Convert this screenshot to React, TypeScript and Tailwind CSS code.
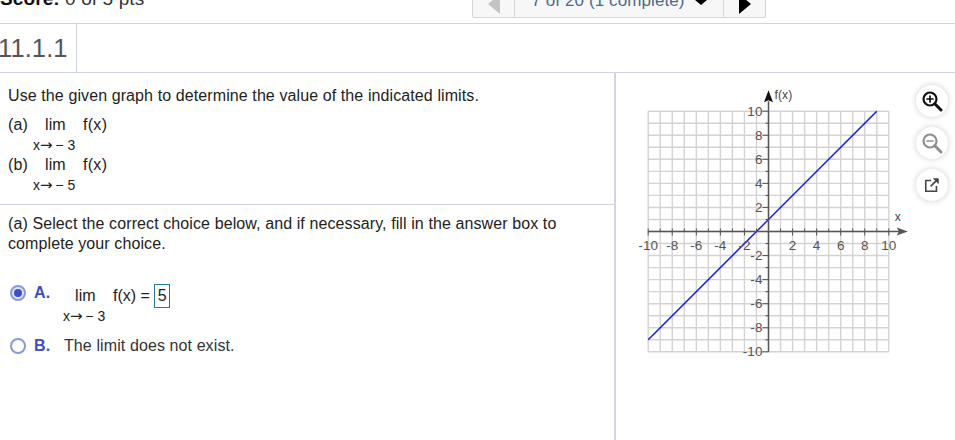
const font = "[font-family:'Liberation_Sans',Arial,sans-serif]"

function Limit({ to, className = '' }: { to: string; className?: string }) {
    return (
        <div className={`flex flex-col items-start ${className}`}>
            <div className="h-[20px] leading-[20px] pl-[12px] whitespace-pre">lim</div>
            <div className="h-[20px] leading-[20px] text-[14px] whitespace-pre">
                x<span className="[font-family:'DejaVu_Sans',sans-serif] text-[15px] tracking-[-1.5px]">→</span> − {to}
            </div>
        </div>
    )
}

function LimitRow({ label, to }: { label: string; to: string }) {
    return (
        <div className="flex h-[40px] text-[#222]">
            <div className="w-[25px] leading-[20px]">{label}</div>
            <div className="flex">
                <Limit to={to} className="w-[50px]" />
                <div className="leading-[20px] tracking-[0.3px]">f(x)</div>
            </div>
        </div>
    )
}

function Graph() {
    const unit = 12.03
    const x0 = 152.5
    const y0 = 151.5
    const px = (v: number) => x0 + v * unit
    const py = (v: number) => y0 - v * unit
    const ticks = Array.from({ length: 21 }, (_, i) => i - 10)
    const labels = [-10, -8, -6, -4, -2, 2, 4, 6, 8, 10]

    return (
        <svg width="300" height="290" viewBox="0 0 300 290" className="shrink-0">
            {ticks.map(t => (
                <g key={t} stroke="#d3d3d3" strokeWidth="1.4">
                    <line x1={px(t)} y1={py(10)} x2={px(t)} y2={py(-10)} />
                    <line x1={px(-10)} y1={py(t)} x2={px(10)} y2={py(t)} />
                </g>
            ))}
            <line x1={px(-10)} y1={py(-9)} x2={px(9)} y2={py(10)} stroke="#1414e6" strokeWidth="1.5" />
            <line x1={px(-10)} y1={y0} x2={px(10) + 12} y2={y0} stroke="#555" strokeWidth="1.5" />
            <line x1={x0} y1={py(-10)} x2={x0} y2={py(10) - 10} stroke="#555" strokeWidth="1.5" />
            <path d={`M${x0} ${py(10) - 21} L${x0 + 4.5} ${py(10) - 9} L${x0} ${py(10) - 11} L${x0 - 4.5} ${py(10) - 9} Z`} fill="#111" />
            <path d={`M${px(10) + 19} ${y0} L${px(10) + 8} ${y0 - 4} L${px(10) + 10} ${y0} L${px(10) + 8} ${y0 + 4} Z`} fill="#555" />
            {ticks.map(t => (
                <g key={t} stroke="#555" strokeWidth="1">
                    <line x1={px(t)} y1={y0 - 3} x2={px(t)} y2={y0 + (t % 2 === 0 ? 4 : 0)} />
                    <line x1={x0 - (t % 2 === 0 ? 6 : 3)} y1={py(t)} x2={x0} y2={py(t)} />
                </g>
            ))}
            <g fontFamily="'Liberation Sans', Arial, sans-serif" fontSize="13.5" fill="#555">
                {labels.map(v => (
                    <text key={`x${v}`} x={px(v)} y={y0 + 18} textAnchor="middle">{v}</text>
                ))}
                {labels.map(v => (
                    <text key={`y${v}`} x={x0 - 6} y={py(v) + 4.5} textAnchor="end">{v}</text>
                ))}
                <text x={px(10) + 9} y={y0 - 11} textAnchor="middle" fontSize="12" fill="#444">x</text>
                <text x={x0 + 6} y={py(10) - 12} fontSize="12" fill="#444">f(x)</text>
            </g>
        </svg>
    )
}

function ZoomIcon({ plus, color }: { plus: boolean; color: string }) {
    return (
        <svg width="22" height="22" viewBox="0 0 22 22" fill="none" stroke={color} strokeLinecap="round">
            <circle cx="9" cy="9" r="6.5" strokeWidth="2.2" />
            <path d="M13.8 13.8 L20 20" strokeWidth="3" />
            <path d="M6 9 H12" strokeWidth="1.7" />
            {plus && <path d="M9 6 V12" strokeWidth="1.7" />}
        </svg>
    )
}

function ToolButton({ children }: { children: React.ReactNode }) {
    return (
        <div className="w-[32px] h-[32px] rounded-full bg-white shadow-[0_0_6px_rgba(0,0,0,0.2)] flex items-center justify-center">
            {children}
        </div>
    )
}

export default function App() {
    return (
        <div className={`w-[955px] h-[440px] overflow-hidden bg-white flex flex-col text-[16px] tracking-[0.1px] text-[#222] ${font}`}>
            {/* top bar, cut off by the top of the page */}
            <div className="h-[24px] shrink-0 border-b border-[#d4d4dc] flex items-start overflow-hidden">
                <div className="w-[472px] -mt-[11px] text-[19px] leading-[20px] text-[#333]">
                    <b className="text-[#111]">Score:</b> 0 of 5 pts
                </div>
                <div className="w-[294px] h-[18px] flex bg-[#f7f7f7] border border-[#d6d6d6] border-t-0 rounded-b-[3px]">
                    <div className="w-[42px] border-r border-[#d6d6d6] flex items-start justify-center">
                        <div className="w-0 h-0 -mt-[6px] border-y-[10px] border-y-transparent border-r-[12px] border-r-[#c4c4c4]" />
                    </div>
                    <div className="flex-1 flex items-start justify-center gap-[10px] overflow-hidden">
                        <span className="-mt-[9px] leading-[20px] text-[17px] text-[#4a6a92]">7 of 20 (1 complete)</span>
                        <div className="w-0 h-0 border-x-[6px] border-x-transparent border-t-[5px] border-t-black" />
                    </div>
                    <div className="w-[42px] border-l border-[#d6d6d6] flex items-start justify-center">
                        <div className="w-0 h-0 -mt-[6px] border-y-[10px] border-y-transparent border-l-[12px] border-l-black" />
                    </div>
                </div>
            </div>

            {/* question number */}
            <div className="h-[49px] shrink-0 border-b border-[#d0d4e4] flex">
                <div className="w-[77px] border-r border-[#d0d4e4] text-[25.5px] leading-[48px] text-[#555] pl-0">
                    <span className="-ml-[2px] block">11.1.1</span>
                </div>
            </div>

            <div className="flex flex-1 min-h-0">
                {/* question + answer */}
                <div className="w-[616px] shrink-0 border-r-2 border-[#d0d4e4] flex flex-col">
                    <div className="h-[132px] shrink-0 border-b border-[#d0d4e4] pl-[8px] pt-[13px]">
                        <div className="leading-[20px] mb-[9px]">Use the given graph to determine the value of the indicated limits.</div>
                        <LimitRow label="(a)" to="3" />
                        <LimitRow label="(b)" to="5" />
                    </div>
                    <div className="pl-[8px] pt-[9px] leading-[20px]">
                        <div>(a) Select the correct choice below, and if necessary, fill in the answer box to</div>
                        <div>complete your choice.</div>
                    </div>
                    <div className="pl-[10px] pt-[29px]">
                        <div className="flex items-start h-[50px]">
                            <div className="w-[16px] h-[16px] mt-[2px] rounded-full border-2 border-[#8a9ad8] flex items-center justify-center bg-[#dfe4f7]">
                                <div className="w-[8px] h-[8px] rounded-full bg-[#3c50c8]" />
                            </div>
                            <div className="w-[37px] pl-[8px] font-bold text-[#3c50c0] leading-[20px]">A.</div>
                            <div className="flex mt-[3px]">
                                <Limit to="3" className="w-[50px]" />
                                <div className="leading-[20px] whitespace-pre tracking-normal">f(x) = </div>
                                <div className="w-[16px] h-[24px] -mt-[2px] border border-[#1f7a9c] text-center leading-[22px]">5</div>
                            </div>
                        </div>
                        <div className="flex items-start mt-[3px]">
                            <div className="w-[16px] h-[16px] mt-[2px] rounded-full border-2 border-[#8a9ad8]" />
                            <div className="w-[38px] pl-[8px] font-bold text-[#3c50c0] leading-[20px]">B.</div>
                            <div className="leading-[20px] text-[#333]">The limit does not exist.</div>
                        </div>
                    </div>
                </div>

                {/* graph + tools */}
                <div className="flex-1 flex">
                    <div className="pt-[7px] w-[300px] shrink-0">
                        <Graph />
                    </div>
                    <div className="flex flex-col gap-[10px] pt-[12px]">
                        <ToolButton><ZoomIcon plus color="#111" /></ToolButton>
                        <ToolButton><ZoomIcon plus={false} color="#8f8f8f" /></ToolButton>
                        <ToolButton>
                            <svg width="16" height="16" viewBox="0 0 18 18" fill="none" stroke="#444" strokeWidth="1.8">
                                <path d="M8 4 H2 V16 H14 V10" />
                                <path d="M7.5 10.5 L15 3" />
                                <path d="M10.5 2 H16 V7.5" fill="#444" strokeWidth="1" />
                            </svg>
                        </ToolButton>
                    </div>
                </div>
            </div>
        </div>
    )
}
